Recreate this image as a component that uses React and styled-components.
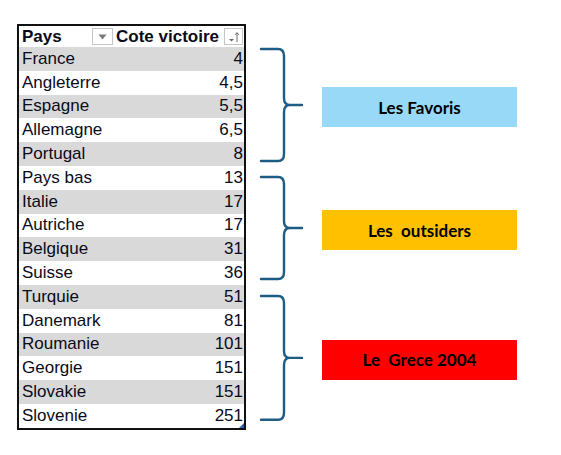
import styled, { createGlobalStyle } from 'styled-components';

const ROW_H = 23.8;

const rows = [
    ['France', '4'],
    ['Angleterre', '4,5'],
    ['Espagne', '5,5'],
    ['Allemagne', '6,5'],
    ['Portugal', '8'],
    ['Pays bas', '13'],
    ['Italie', '17'],
    ['Autriche', '17'],
    ['Belgique', '31'],
    ['Suisse', '36'],
    ['Turquie', '51'],
    ['Danemark', '81'],
    ['Roumanie', '101'],
    ['Georgie', '151'],
    ['Slovakie', '151'],
    ['Slovenie', '251'],
];

const groups = [
    { label: 'Les Favoris', color: '#97d9f6', rows: 5, padTop: 0, padBottom: 3 },
    { label: 'Les  outsiders', color: '#ffc000', rows: 5, padTop: 9, padBottom: 4 },
    { label: 'Le  Grece 2004', color: '#ff0000', rows: 6, padTop: 9, padBottom: 6 },
];

const Brace = ({ height }) => {
    const m = height / 2;
    const h = height;
    const d = `M2 2 H19 Q25 2 25 9 V${m - 7} Q25 ${m} 31 ${m} H43 M31 ${m} Q25 ${m} 25 ${m + 7} V${h - 9} Q25 ${h - 2} 19 ${h - 2} H2`;
    return (
        <BraceSvg width="46" height={h} viewBox={`0 0 46 ${h}`}>
            <path d={d} fill="none" stroke="#1d5c84" strokeWidth="2.4" strokeLinecap="round" />
        </BraceSvg>
    );
};

const App = () => {
    return (
        <>
            <GlobalStyle />
            <Page>
                <Table>
                    <HeaderRow>
                        <NameCell>
                            <span>Pays</span>
                            <FilterButton>
                                <svg width="9" height="6" viewBox="0 0 9 6">
                                    <path d="M0.5 0.5 H8.5 L4.5 5.5 Z" fill="#7a7a7a" />
                                </svg>
                            </FilterButton>
                        </NameCell>
                        <ValueCell>
                            <span>Cote victoire</span>
                            <SortButton>
                                <svg width="12" height="12" viewBox="0 0 12 12">
                                    <path d="M1 8 H6 L3.5 10.5 Z" fill="#6a6a6a" />
                                    <path d="M9 11 V2 M7.2 3.8 L9 1.6 L10.8 3.8" fill="none" stroke="#6a6a6a" strokeWidth="1" />
                                </svg>
                            </SortButton>
                        </ValueCell>
                    </HeaderRow>
                    {rows.map(([name, value], i) => (
                        <Row key={name} shaded={i % 2 === 0}>
                            <NameCell>{name}</NameCell>
                            <ValueCell>{value}</ValueCell>
                        </Row>
                    ))}
                    <ResizeHandle />
                </Table>
                <Groups>
                    {groups.map((g) => {
                        const h = g.rows * ROW_H;
                        return (
                            <Group key={g.label} style={{ height: h }} padTop={g.padTop} padBottom={g.padBottom}>
                                <Brace height={h - g.padTop - g.padBottom} />
                                <Label color={g.color}>{g.label}</Label>
                            </Group>
                        );
                    })}
                </Groups>
            </Page>
        </>
    );
};

const GlobalStyle = createGlobalStyle`
    body {
        margin: 0;
        background: #ffffff;
        font-family: "Liberation Sans", Arial, sans-serif;
    }
`;

const Page = styled.div`
    display: flex;
    align-items: flex-start;
    width: 561px;
    height: 455px;
    padding: 24px 0 0 17px;
    box-sizing: border-box;
`;

const Table = styled.div`
    position: relative;
    display: flex;
    flex-direction: column;
    width: 229px;
    border: 2px solid #111111;
    box-sizing: border-box;
    color: #0a0a1a;
    font-size: 17px;
`;

const Row = styled.div`
    display: grid;
    grid-template-columns: 96px 1fr;
    height: ${ROW_H}px;
    align-items: center;
    background: ${({ shaded }) => (shaded ? '#d9d9d9' : '#ffffff')};
`;

const HeaderRow = styled(Row)`
    height: 21px;
    font-weight: 700;
    background: #ffffff;
`;

const NameCell = styled.div`
    display: flex;
    align-items: center;
    justify-content: space-between;
    padding-left: 3px;
    white-space: nowrap;
`;

const ValueCell = styled.div`
    display: flex;
    align-items: center;
    justify-content: flex-end;
    gap: 5px;
    padding-right: 1px;
    white-space: nowrap;
`;

const FilterButton = styled.div`
    display: flex;
    align-items: center;
    justify-content: center;
    width: 21px;
    height: 17px;
    margin-right: 2px;
    border: 1px solid #c6c6c6;
    box-sizing: border-box;
    background: #ffffff;
`;

const SortButton = styled(FilterButton)`
    width: 19px;
    margin-right: 0;
`;

const ResizeHandle = styled.div`
    position: absolute;
    right: 0;
    bottom: 0;
    width: 0;
    height: 0;
    border-left: 5px solid transparent;
    border-bottom: 5px solid #2f5fb3;
`;

const Groups = styled.div`
    display: flex;
    flex-direction: column;
    padding-top: 23px;
    margin-left: 13px;
`;

const Group = styled.div`
    display: flex;
    align-items: center;
    padding-top: ${({ padTop }) => padTop}px;
    padding-bottom: ${({ padBottom }) => padBottom}px;
    box-sizing: border-box;
`;

const BraceSvg = styled.svg`
    display: block;
    flex-shrink: 0;
`;

const Label = styled.div`
    display: flex;
    align-items: center;
    justify-content: center;
    width: 195px;
    height: 40px;
    margin-left: 17px;
    margin-top: 4px;
    background: ${({ color }) => color};
    font-family: Lato, "Liberation Sans", sans-serif;
    font-weight: 700;
    font-size: 17px;
    color: #000000;
    white-space: pre;
`;

export default App;
